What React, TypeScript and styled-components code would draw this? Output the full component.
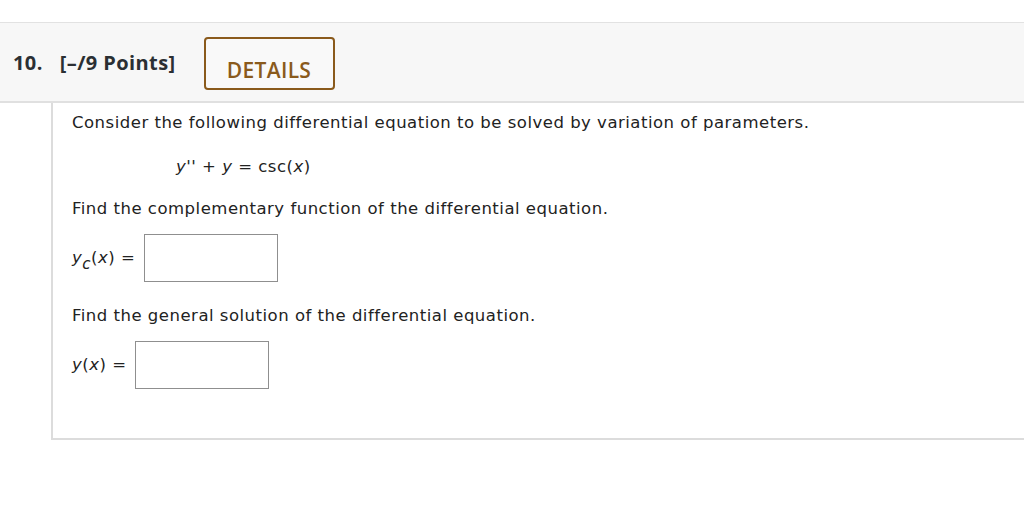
import React from 'react';
import styled, {createGlobalStyle} from 'styled-components';

const GlobalStyle = createGlobalStyle`
  html, body {
    margin: 0;
    padding: 0;
    background: #ffffff;
  }
`;

const Page = styled.div`
  width: 1024px;
  height: 513px;
  padding-top: 22px;
  box-sizing: border-box;
  overflow: hidden;
`;

const HeaderBar = styled.div`
  height: 78px;
  background: #f7f7f7;
  border-top: 1px solid #e2e2e2;
  border-bottom: 2px solid #e0e0e0;
  display: flex;
  align-items: center;
  padding-left: 13px;
`;

const HeaderText = styled.span<{gap: number}>`
  font-family: 'Open Sans', sans-serif;
  font-weight: 700;
  font-size: 20px;
  letter-spacing: 0.4px;
  color: #2b2f33;
  margin-right: ${({gap}) => gap}px;
  margin-top: 1px;
`;

const DetailsButton = styled.button`
  margin-top: 2px;
  width: 131px;
  height: 53px;
  border: 2px solid #8a5a1c;
  border-radius: 4px;
  background: #f9f9f9;
  color: #8a5a1c;
  font-family: 'Open Sans', sans-serif;
  font-weight: 600;
  font-size: 21px;
  letter-spacing: 0.3px;
  padding: 14px 0 0;
  cursor: pointer;
`;

const Panel = styled.div`
  margin-left: 51px;
  height: 337px;
  border-left: 2px solid #dcdcdc;
  border-bottom: 2px solid #dcdcdc;
  padding: 10px 0 0 19px;
  box-sizing: border-box;
  font-family: 'DejaVu Sans', Verdana, sans-serif;
  font-size: 16.5px;
  letter-spacing: 0.5px;
  color: #222;
`;

const Para = styled.p<{top: number}>`
  margin: ${({top}) => top}px 0 0;
  line-height: 20px;
  white-space: nowrap;
`;

const Equation = styled.div`
  margin: 24px 0 0 104px;
  line-height: 20px;
`;

const AnswerRow = styled.div<{top: number}>`
  display: flex;
  align-items: center;
  margin-top: ${({top}) => top}px;
`;

const Label = styled.span`
  margin-right: 9px;
  line-height: 20px;
`;

const Sub = styled.sub`
  font-size: 15px;
  vertical-align: -6px;
  line-height: 0;
`;

const AnswerBox = styled.input`
  width: 134px;
  height: 48px;
  box-sizing: border-box;
  border: 1px solid #8f8f8f;
  background: #fff;
  margin: 0;
  padding: 0;
`;

const App = () => (
  <Page>
    <GlobalStyle />
    <HeaderBar>
      <HeaderText gap={17}>10.</HeaderText>
      <HeaderText gap={28}>[–/9 Points]</HeaderText>
      <DetailsButton>DETAILS</DetailsButton>
    </HeaderBar>
    <Panel>
      <Para top={0}>
        Consider the following differential equation to be solved by variation of parameters.
      </Para>
      <Equation>
        <i>y</i>'' + <i>y</i> = csc(<i>x</i>)
      </Equation>
      <Para top={22}>Find the complementary function of the differential equation.</Para>
      <AnswerRow top={15}>
        <Label>
          <i>y</i><Sub><i>c</i></Sub>(<i>x</i>) =
        </Label>
        <AnswerBox />
      </AnswerRow>
      <Para top={24}>Find the general solution of the differential equation.</Para>
      <AnswerRow top={15}>
        <Label>
          <i>y</i>(<i>x</i>) =
        </Label>
        <AnswerBox />
      </AnswerRow>
    </Panel>
  </Page>
);

export default App;
